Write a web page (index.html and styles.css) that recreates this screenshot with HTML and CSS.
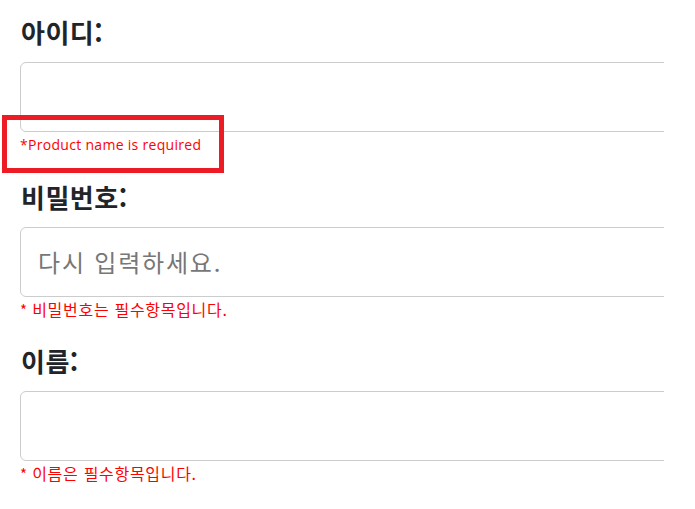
FILE: index.html
```html
<!DOCTYPE html>
<html lang="ko">
<head>
<meta charset="utf-8">
<link rel="stylesheet" href="styles.css">
</head>
<body>
<div class="page">
  <form class="form">
    <div class="field">
      <label class="label">아이디:</label>
      <input class="input" type="text">
      <div class="error en">*Product name is required</div>
    </div>
    <div class="field">
      <label class="label">비밀번호:</label>
      <input class="input" type="text" placeholder="다시 입력하세요.">
      <div class="error"><span class="star">*</span> 비밀번호는 필수항목입니다.</div>
    </div>
    <div class="field">
      <label class="label">이름:</label>
      <input class="input" type="text">
      <div class="error"><span class="star">*</span> 이름은 필수항목입니다.</div>
    </div>
  </form>
  <div class="highlight"></div>
</div>
</body>
</html>
```

FILE: styles.css
```css
html, body {
  margin: 0;
  padding: 0;
  background: #fff;
}
.page {
  position: relative;
  width: 664px;
  height: 509px;
  overflow: hidden;
}
.form {
  padding: 16px 0 0 20px;
  display: flex;
  flex-direction: column;
  gap: 26.5px;
}
.field {
  display: flex;
  flex-direction: column;
}
.label {
  font-family: "Noto Sans CJK KR", "Noto Sans", sans-serif;
  font-weight: 700;
  font-size: 26px;
  line-height: 32px;
  height: 32px;
  letter-spacing: 0.5px;
  color: #212529;
  margin-bottom: 14px;
  padding-left: 1px;
}
.input {
  box-sizing: border-box;
  width: 680px;
  height: 70px;
  margin: 0;
  border: 1px solid #cccccc;
  border-radius: 6px;
  padding: 0 17px;
  font-family: "Noto Sans CJK KR", "Noto Sans", sans-serif;
  font-size: 24px;
  letter-spacing: 1.8px;
  color: #212529;
  outline: none;
  background: #fff;
}
.input::placeholder {
  color: #777777;
}
.error {
  font-family: "Noto Sans CJK KR", "Noto Sans", sans-serif;
  font-size: 16px;
  line-height: 19px;
  height: 19px;
  letter-spacing: 0.7px;
  color: #ff0000;
  padding-top: 3px;
}
.star {
  font-size: 15px;
  letter-spacing: 0;
}
.error.en {
  font-family: "Open Sans", "Noto Sans", sans-serif;
  font-size: 14px;
  letter-spacing: 0.3px;
}
.highlight {
  position: absolute;
  left: 2px;
  top: 115px;
  width: 222px;
  height: 58px;
  box-sizing: border-box;
  border: 5px solid #ed1c24;
}
```
